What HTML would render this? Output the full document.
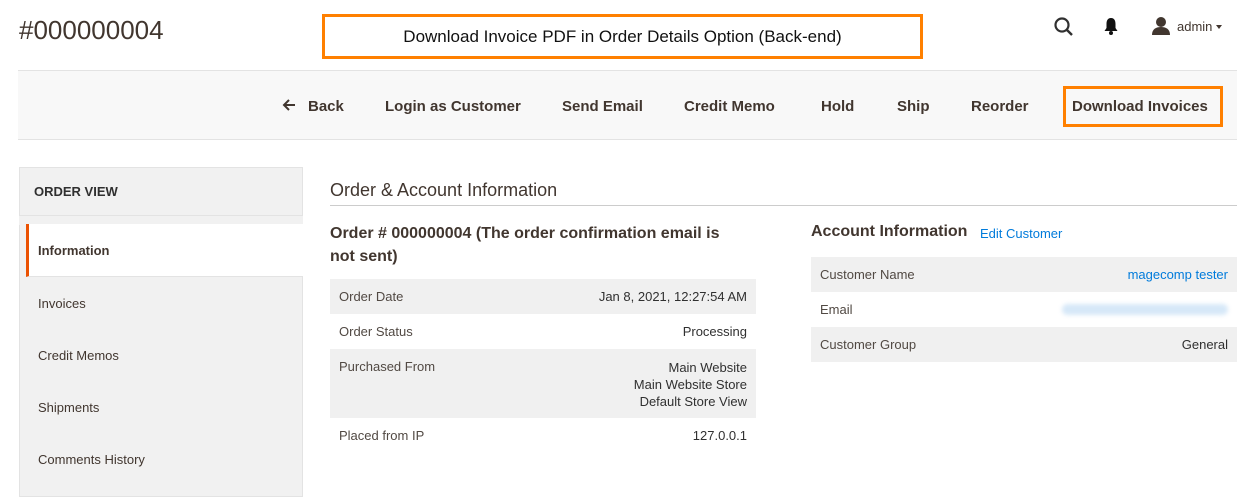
<!DOCTYPE html>
<html><head><meta charset="utf-8"><style>
*{margin:0;padding:0;box-sizing:border-box}
body{width:1245px;height:494px;overflow:hidden;background:#fff;font-family:"Liberation Sans",sans-serif;color:#41362f;position:relative}
.a{position:absolute;white-space:nowrap}
.tb{font-weight:bold;font-size:15px;color:#41362f;top:98px}
.lab{font-size:13px;color:#514943}
.val{font-size:13px;color:#303030;text-align:right}
.row{position:absolute;background:#f0f0f0}
.side{font-size:13px;color:#41362f;left:38px}
</style></head><body>
<div class="a" style="left:19px;top:15px;font-size:26px;color:#41362f">#000000004</div>
<div class="a" style="left:322px;top:14px;width:601px;height:45px;border:3px solid #ff8000;font-size:17px;color:#111;text-align:center;line-height:39px">Download Invoice PDF in Order Details Option (Back-end)</div>
<svg class="a" style="left:1053px;top:16px" width="22" height="22" viewBox="0 0 22 22"><circle cx="9" cy="9" r="6.5" fill="none" stroke="#303030" stroke-width="2.2"/><line x1="13.5" y1="13.5" x2="19" y2="19" stroke="#303030" stroke-width="2.4"/></svg>
<svg class="a" style="left:1103px;top:17px" width="16" height="19" viewBox="0 0 16 19"><path d="M8 1C4.5 1 3.5 4 3.5 7V11L1.5 14H14.5L12.5 11V7C12.5 4 11.5 1 8 1Z" fill="#111"/><circle cx="8" cy="16" r="2" fill="#111"/></svg>
<svg class="a" style="left:1151px;top:16px" width="20" height="19" viewBox="0 0 20 19"><circle cx="10" cy="6" r="5" fill="#41362f"/><path d="M1 19C1 13 5 11 10 11S19 13 19 19Z" fill="#41362f"/></svg>
<div class="a" style="left:1177px;top:19px;font-size:13px;color:#41362f">admin</div>
<div class="a" style="left:1216px;top:25px;border-left:3.5px solid transparent;border-right:3.5px solid transparent;border-top:4px solid #41362f"></div>

<div class="a" style="left:18px;top:70px;width:1219px;height:70px;background:#f8f8f8;border-top:1px solid #e3e3e3;border-bottom:1px solid #e3e3e3"></div>
<svg class="a" style="left:282px;top:98px" width="14" height="14" viewBox="0 0 14 14"><path d="M13 7H2M7 2L2 7L7 12" fill="none" stroke="#41362f" stroke-width="2"/></svg>
<div class="a tb" style="left:308px">Back</div>
<div class="a tb" style="left:385px">Login as Customer</div>
<div class="a tb" style="left:562px">Send Email</div>
<div class="a tb" style="left:684px">Credit Memo</div>
<div class="a tb" style="left:821px">Hold</div>
<div class="a tb" style="left:897px">Ship</div>
<div class="a tb" style="left:971px">Reorder</div>
<div class="a" style="left:1063px;top:86px;width:160px;height:41px;border:3px solid #ff8000"></div>
<div class="a tb" style="left:1072px">Download Invoices</div>

<div class="a" style="left:19px;top:167px;width:284px;height:330px;background:#f1f1f1;border:1px solid #e3e3e3"></div>
<div class="a" style="left:19px;top:215px;width:284px;height:10px;border-top:1px solid #e3e3e3;background:#f1f1f1"></div>
<div class="a" style="left:34px;top:184px;font-size:13px;font-weight:bold;color:#303030">ORDER VIEW</div>
<div class="a" style="left:26px;top:224px;width:277px;height:53px;background:#fff;border-left:3px solid #eb5202;border-bottom:1px solid #e3e3e3"></div>
<div class="a side" style="top:243px;font-weight:bold">Information</div>
<div class="a side" style="top:296px">Invoices</div>
<div class="a side" style="top:348px">Credit Memos</div>
<div class="a side" style="top:400px">Shipments</div>
<div class="a side" style="top:452px">Comments History</div>

<div class="a" style="left:330px;top:180px;font-size:18px;color:#41362f">Order &amp; Account Information</div>
<div class="a" style="left:330px;top:205px;width:907px;border-top:1px solid #ccc"></div>
<div class="a" style="left:330px;top:222px;font-size:16px;font-weight:bold;line-height:23px;white-space:normal;width:405px">Order # 000000004 (The order confirmation email is not sent)</div>
<div class="row" style="left:330px;top:279px;width:426px;height:35px"></div>
<div class="row" style="left:330px;top:349px;width:426px;height:69px"></div>
<div class="a lab" style="left:339px;top:289px">Order Date</div>
<div class="a val" style="right:498px;top:289px">Jan 8, 2021, 12:27:54 AM</div>
<div class="a lab" style="left:339px;top:324px">Order Status</div>
<div class="a val" style="right:498px;top:324px">Processing</div>
<div class="a lab" style="left:339px;top:359px">Purchased From</div>
<div class="a val" style="right:498px;top:359px;line-height:17px">Main Website<br>Main Website Store<br>Default Store View</div>
<div class="a lab" style="left:339px;top:428px">Placed from IP</div>
<div class="a val" style="right:498px;top:428px">127.0.0.1</div>

<div class="a" style="left:811px;top:223px;font-size:16px;font-weight:bold">Account Information</div>
<div class="a" style="left:980px;top:226px;font-size:13px;color:#007bdb">Edit Customer</div>
<div class="row" style="left:811px;top:257px;width:426px;height:35px"></div>
<div class="row" style="left:811px;top:327px;width:426px;height:35px"></div>
<div class="a lab" style="left:820px;top:267px">Customer Name</div>
<div class="a val" style="right:17px;top:267px;color:#007bdb">magecomp tester</div>
<div class="a lab" style="left:820px;top:302px">Email</div>
<div class="a" style="left:1062px;top:304px;width:166px;height:11px;background:#d6e8f8;border-radius:6px;filter:blur(2px)"></div>
<div class="a lab" style="left:820px;top:337px">Customer Group</div>
<div class="a val" style="right:17px;top:337px">General</div>
</body></html>
